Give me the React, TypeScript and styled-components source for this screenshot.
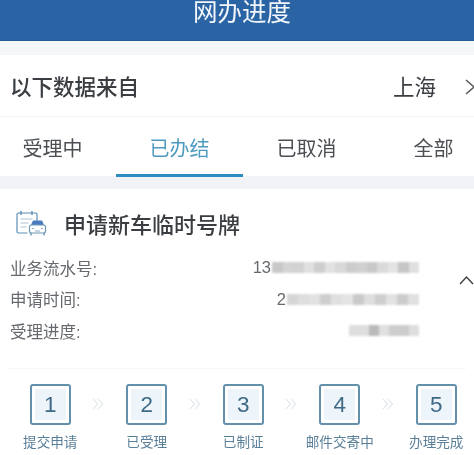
import React from "react";
import styled, { createGlobalStyle } from "styled-components";

const Global = createGlobalStyle`
  html, body { margin: 0; padding: 0; background: #fff; overflow: hidden; }
  body { font-family: "Liberation Sans", "Noto Sans CJK SC", sans-serif; }
`;

const Page = styled.div`
  width: 474px;
  height: 455px;
  overflow: hidden;
  filter: blur(0.35px);
`;
const Header = styled.header`
  height: 41px;
  background: #2a64a5;
  color: #f2f6fb;
  font-size: 24.5px;
  line-height: 25px;
  padding-left: 10px;
  text-align: center;
  box-sizing: border-box;
  box-shadow: inset 0 -1px 0 #245a96;
`;
const Strip = styled.div`
  height: ${(p: { $h: number; $bg: string }) => p.$h}px;
  background: ${(p: { $h: number; $bg: string }) => p.$bg};
`;
const SourceRow = styled.div`
  height: 61px;
  display: flex;
  align-items: center;
  padding-left: 10px;
  font-size: 21.5px;
  font-weight: 500;
  color: #3a3e42;
  border-bottom: 1px solid #f3f4f5;
`;
const SourceLabel = styled.span`
  flex: 1;
`;
const City = styled.span`
  margin-right: 29px;
  font-weight: 400;
`;
const ChevronRight = styled.svg`
  width: 9px;
  height: 16px;
  flex: none;
  margin-top: 3px;
`;
const Tabs = styled.nav`
  height: 59px;
  width: 508px;
  margin-left: -11px;
  display: grid;
  grid-template-columns: repeat(4, 127px);
  background: #fff;
`;
const Tab = styled.div<{ $active?: boolean }>`
  display: flex;
  align-items: center;
  justify-content: center;
  padding-top: 4px;
  box-sizing: border-box;
  height: 60px;
  font-size: 20px;
  color: ${(p) => (p.$active ? "#4f9bc0" : "#4c5054")};
  border-bottom: 3px solid ${(p) => (p.$active ? "#2e8cc0" : "transparent")};
  position: relative;
  z-index: 1;
`;
const Card = styled.section`
  background: #fff;
`;
const CardTitle = styled.div`
  height: 68px;
  display: flex;
  align-items: center;
  padding: 0 0 0 15px;
  gap: 17px;
  font-size: 22px;
  font-weight: 500;
  color: #3a3e42;
`;
const Fields = styled.div`
  position: relative;
  padding: 0 55px 0 10px;
  display: grid;
  grid-auto-rows: 31.5px;
  height: 99px;
  margin-top: -5px;
`;
const Field = styled.div`
  display: flex;
  align-items: center;
  justify-content: space-between;
  font-size: 16.5px;
  color: #666a6e;
`;
const Value = styled.div`
  display: flex;
  align-items: center;
`;
const Redact = styled.div<{ $w: number }>`
  width: ${(p) => p.$w}px;
  height: 11px;
  display: flex;
  filter: blur(1.1px);
  margin-left: 1px;
`;
const Cell = styled.i<{ $s: number }>`
  flex: 1;
  background: rgb(${(p) => `${p.$s},${p.$s},${p.$s}`});
`;
const CollapseIcon = styled.svg`
  position: absolute;
  right: 0;
  top: 23px;
  width: 15px;
  height: 10px;
`;
const Rule = styled.div`
  height: 1px;
  background: #f6f7f8;
  margin: 17px 8px 0;
`;
const Steps = styled.div`
  display: flex;
  padding: 15px 0 0 2px;
`;
const Step = styled.div`
  width: 96.5px;
  flex: none;
  display: flex;
  flex-direction: column;
  align-items: center;
  position: relative;
`;
const NumberBox = styled.div`
  width: 41px;
  height: 41px;
  box-sizing: border-box;
  border: 2px solid #6390aa;
  border-radius: 3px;
  padding: 3px;
  background: #fff;
`;
const NumberFill = styled.div`
  height: 100%;
  background: #edf4fa;
  display: flex;
  align-items: center;
  justify-content: center;
  font-size: 22.5px;
  color: #3f6a86;
`;
const StepLabel = styled.div`
  margin-top: 9px;
  font-size: 13.6px;
  line-height: 18px;
  color: #5a7f98;
  white-space: nowrap;
`;
const Arrows = styled.svg`
  position: absolute;
  left: 90px;
  top: 14px;
  width: 12px;
  height: 12px;
`;

const Doc = () => (
  <svg width="32" height="26" viewBox="0 0 32 26" fill="none" style={{ flex: "none" }}>
    <path d="M22 12V4.5a1.5 1.5 0 0 0-1.5-1.5h-17A1.5 1.5 0 0 0 2 4.5v17A1.5 1.5 0 0 0 3.500 23h9" stroke="#5c8fb5" strokeWidth="1.2" />
    <path d="M6 1v4M17 1v4" stroke="#5c8fb5" strokeWidth="1.4" />
    <path d="M5.500 9h12M5.500 13h8M5.500 17h6" stroke="#a9c3d8" strokeWidth="1.1" />
    <path d="M16 15l2-4.500h9l2 4.500z" fill="#4a7cc0" />
    <rect x="14.500" y="15" width="16" height="8" rx="2" stroke="#6d97b5" strokeWidth="1.2" fill="#fff" />
    <path d="M16 23v2.500M29 23v2.500" stroke="#6d97b5" strokeWidth="1.4" />
    <path d="M17 18.500h2M26 18.500h2M20 21h5" stroke="#8eb0c8" strokeWidth="1.1" />
  </svg>
);

const shades = [
  [200, 212, 210, 224, 206, 226, 216, 204, 208, 200, 218, 228, 198, 224],
  [214, 222, 226, 206, 224, 228, 202, 222, 206, 226, 204, 224],
  [222, 222, 186, 224, 206, 204, 222],
];

const Blocks = ({ row, w }: { row: number; w: number }) => (
  <Redact $w={w}>
    {shades[row].map((s, i) => (
      <Cell key={i} $s={s} />
    ))}
  </Redact>
);

const steps = ["提交申请", "已受理", "已制证", "邮件交寄中", "办理完成"];

export default function App() {
  return (
    <Page>
      <Global />
      <Header>网办进度</Header>
      <Strip $h={14} $bg="#f4f7f9" />
      <SourceRow>
        <SourceLabel>以下数据来自</SourceLabel>
        <City>上海</City>
        <ChevronRight viewBox="0 0 9 16" fill="none">
          <path d="M1 1l8 7-8 7" stroke="#555" strokeWidth="1.5" />
        </ChevronRight>
      </SourceRow>
      <Tabs>
        <Tab>受理中</Tab>
        <Tab $active>已办结</Tab>
        <Tab>已取消</Tab>
        <Tab>全部</Tab>
      </Tabs>
      <Strip $h={13} $bg="#f2f3f7" />
      <Card>
        <CardTitle>
          <Doc />
          申请新车临时号牌
        </CardTitle>
        <Fields>
          <Field>
            <span>业务流水号:</span>
            <Value>
              13
              <Blocks row={0} w={147} />
            </Value>
          </Field>
          <Field>
            <span>申请时间:</span>
            <Value>
              2
              <Blocks row={1} w={132} />
            </Value>
          </Field>
          <Field>
            <span>受理进度:</span>
            <Value>
              <Blocks row={2} w={70} />
            </Value>
          </Field>
          <CollapseIcon viewBox="0 0 15 10" fill="none">
            <path d="M1 9l6.500-7L14 9" stroke="#444" strokeWidth="1.5" />
          </CollapseIcon>
        </Fields>
        <Rule />
        <Steps>
          {steps.map((label, i) => (
            <Step key={label}>
              <NumberBox>
                <NumberFill>{i + 1}</NumberFill>
              </NumberBox>
              <StepLabel>{label}</StepLabel>
              {i < 4 && (
                <Arrows viewBox="0 0 12 12" fill="none">
                  <path d="M1 1l4.500 5L1 11M6 1l4.500 5L6 11" stroke="#dfe3e7" strokeWidth="1.1" />
                </Arrows>
              )}
            </Step>
          ))}
        </Steps>
      </Card>
    </Page>
  );
}
